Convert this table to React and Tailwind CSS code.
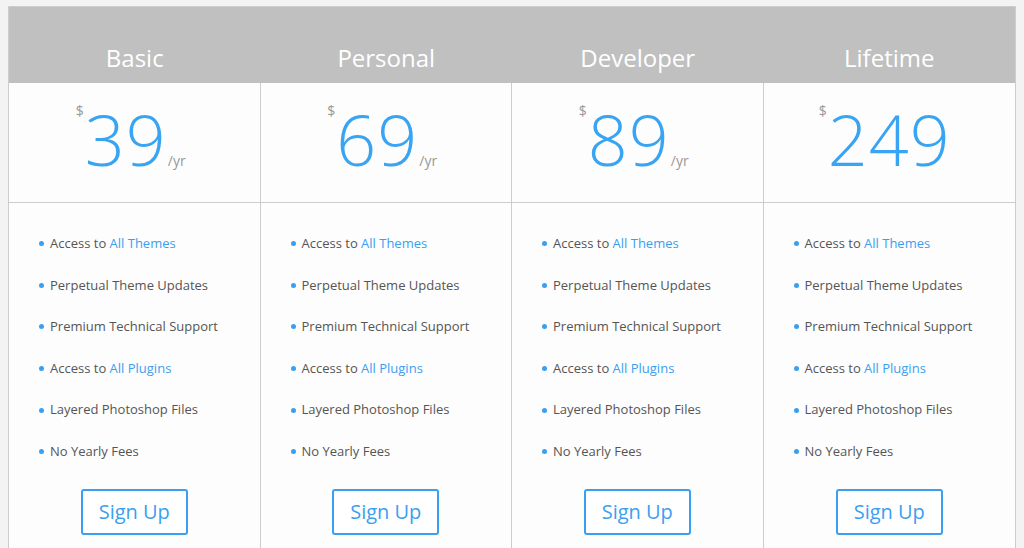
const plans = [
  { name: 'Basic', price: '39', per: true },
  { name: 'Personal', price: '69', per: true },
  { name: 'Developer', price: '89', per: true },
  { name: 'Lifetime', price: '249', per: false },
];

const Feature = ({ children }) => (
  <li className="flex items-center h-[41.6px] text-[13px] text-[#555]">
    <span className="w-[5px] h-[5px] rounded-full bg-[#3a9ff0] mr-[6px] ml-[30px]" />
    <span>{children}</span>
  </li>
);

const PlanColumn = ({ name, price, per, last }) => (
  <div className={`flex flex-col ${last ? '' : 'border-r border-[#cdcdcd]'}`}>
    <div className={`h-[120px] border-b border-[#cdcdcd] flex justify-center items-baseline pt-[18px] ${per ? 'pr-[7px]' : 'pr-[9px]'}`}>
      <span className="self-start mt-[3px] text-[14px] leading-[14px] text-[#999]">$</span>
      <span className="mt-[3px] text-[70px] leading-[70px] font-light text-[#38a4f2] ml-[1px] tracking-[1px]">{price}</span>
      {per && <span className="text-[14px] text-[#999] ml-[1px]">/yr</span>}
    </div>
    <ul className="pt-[20px]">
      <Feature>Access to <span className="text-[#3a9ff0]">All Themes</span></Feature>
      <Feature>Perpetual Theme Updates</Feature>
      <Feature>Premium Technical Support</Feature>
      <Feature>Access to <span className="text-[#3a9ff0]">All Plugins</span></Feature>
      <Feature>Layered Photoshop Files</Feature>
      <Feature>No Yearly Fees</Feature>
    </ul>
    <div className="flex justify-center pt-[16px] pb-[30px]">
      <button className="w-[107px] h-[46px] border-2 border-[#3a9ff0] rounded-[3px] text-[20px] text-[#3a9ff0] bg-white">
        Sign Up
      </button>
    </div>
  </div>
);

export default function App() {
  return (
    <div className="min-h-screen bg-[#f3f3f3] pt-[6px] pl-[8px]" style={{ fontFamily: '"Open Sans", sans-serif' }}>
      <div className="w-[1008px] border border-[#cdcdcd] bg-[#fdfdfd]">
        <div className="grid grid-cols-4 bg-[#c0c0c0] h-[76px]">
          {plans.map((p) => (
            <div key={p.name} className="text-center text-white text-[24px] leading-[34px] pt-[34px]">
              {p.name}
            </div>
          ))}
        </div>
        <div className="grid grid-cols-4">
          {plans.map((p, i) => (
            <PlanColumn key={p.name} {...p} last={i === plans.length - 1} />
          ))}
        </div>
      </div>
    </div>
  );
}
